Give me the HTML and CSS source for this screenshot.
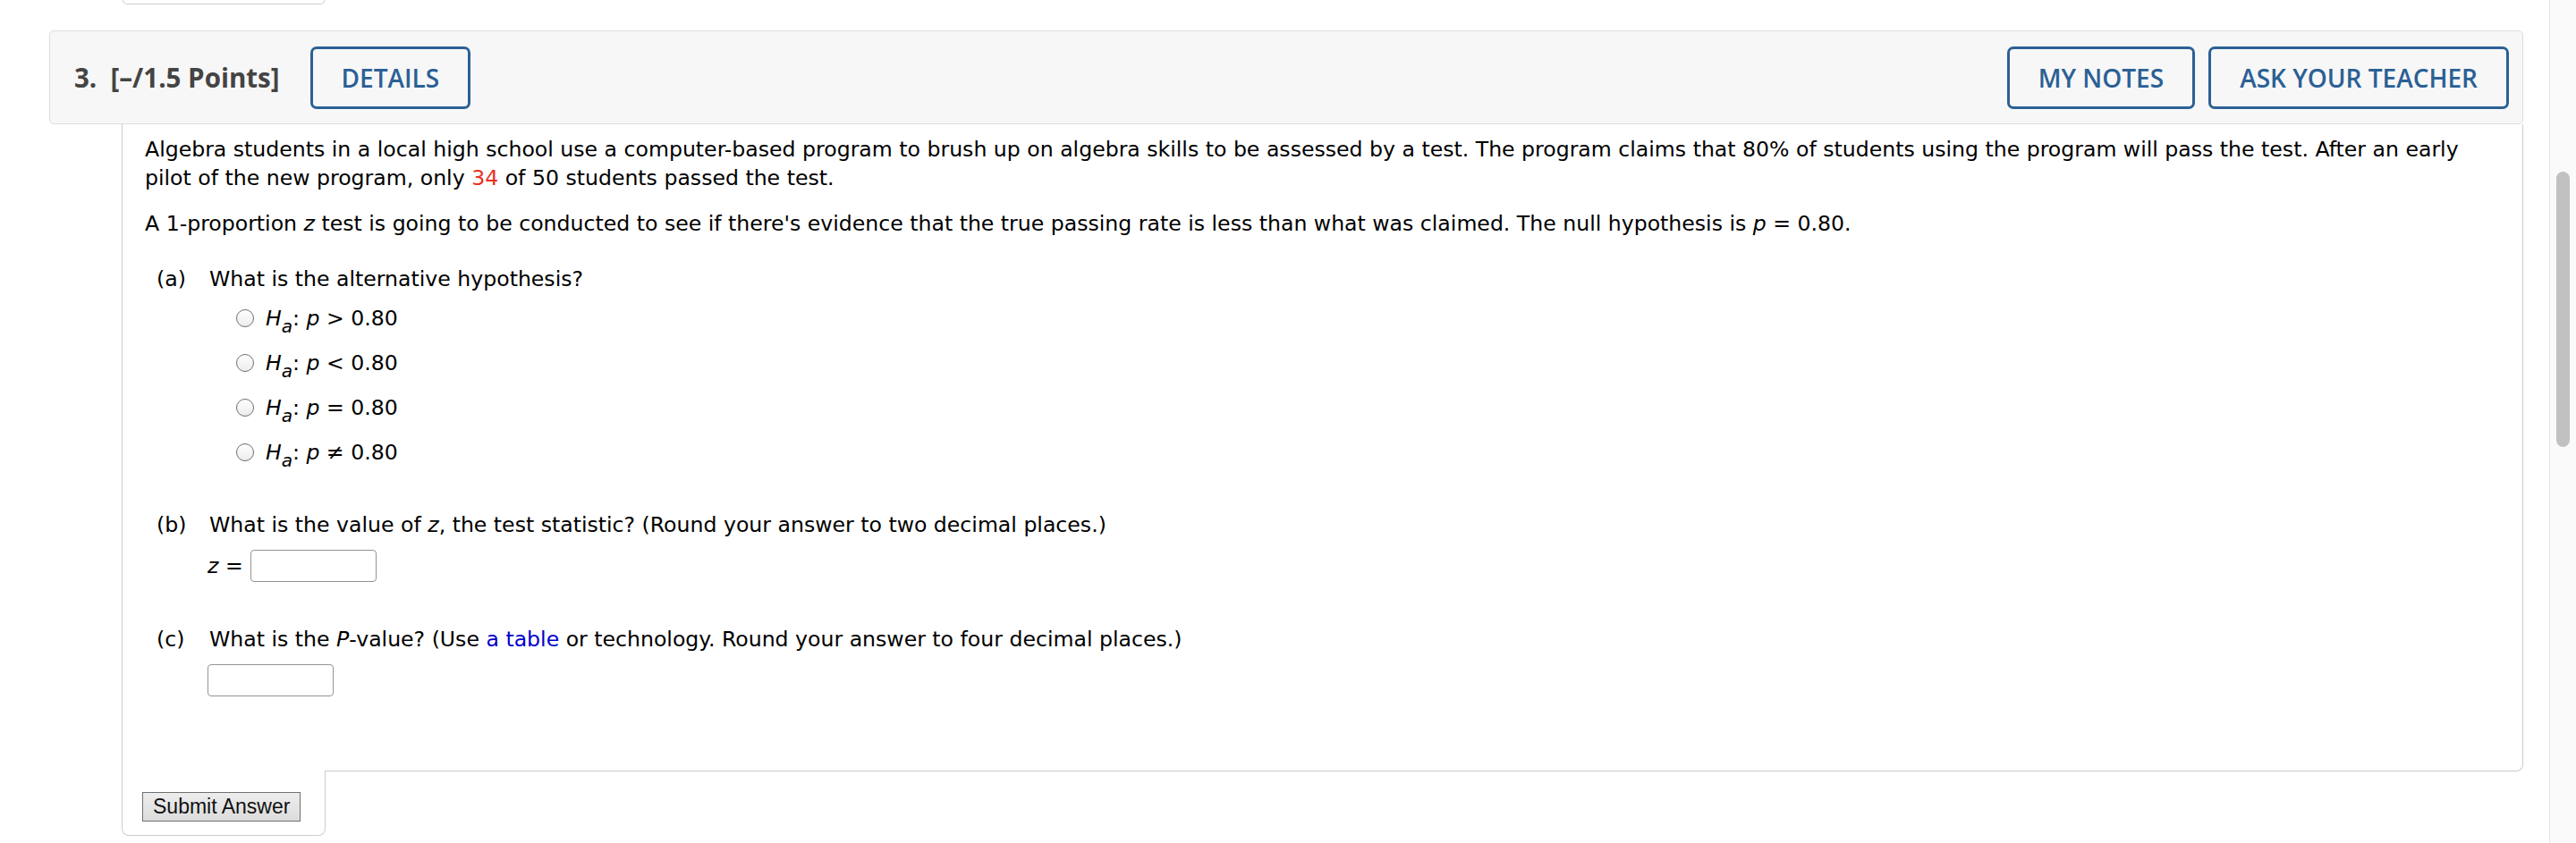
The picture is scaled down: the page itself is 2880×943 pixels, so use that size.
FILE: index.html
```html
<!DOCTYPE html>
<html lang="en">
<head>
<meta charset="utf-8">
<title>Question 3</title>
<link rel="stylesheet" href="styles.css">
</head>
<body>
<div class="page">
  <main class="main">
    <div class="prev-tab"></div>
    <section class="question">
      <header class="q-head">
        <div class="q-title">3.&nbsp;&nbsp;[–/1.5 Points]</div>
        <button class="hbtn details">DETAILS</button>
        <div class="spacer"></div>
        <button class="hbtn">MY NOTES</button>
        <button class="hbtn">ASK YOUR TEACHER</button>
      </header>
      <div class="q-body">
        <p class="p1"><span>Algebra students in a local high school use a computer-based program to brush up on algebra skills to be assessed by a test. The program claims that 80% of students using the program will pass the test. After an early</span> <span>pilot of the new program, only</span> <span class="red">34</span> <span>of 50 students passed the test.</span></p>
        <p class="p2">A 1-proportion <i>z</i> test is going to be conducted to see if there's evidence that the true passing rate is less than what was claimed. The null hypothesis is <i>p</i> = 0.80.</p>

        <div class="part part-a">
          <span class="plabel">(a)</span>
          <span class="ptext">What is the alternative hypothesis?</span>
        </div>
        <div class="choices">
          <div class="choice"><span class="radio"></span><span class="ctext"><i>H</i><sub><i>a</i></sub>: <i>p</i> &gt; 0.80</span></div>
          <div class="choice"><span class="radio"></span><span class="ctext"><i>H</i><sub><i>a</i></sub>: <i>p</i> &lt; 0.80</span></div>
          <div class="choice"><span class="radio"></span><span class="ctext"><i>H</i><sub><i>a</i></sub>: <i>p</i> = 0.80</span></div>
          <div class="choice"><span class="radio"></span><span class="ctext"><i>H</i><sub><i>a</i></sub>: <i>p</i> ≠ 0.80</span></div>
        </div>

        <div class="part part-b">
          <span class="plabel">(b)</span>
          <span class="ptext">What is the value of <i>z</i>, the test statistic? (Round your answer to two decimal places.)</span>
        </div>
        <div class="answer-row">
          <span class="zlabel"><i>z</i> = </span><span class="inputbox"></span>
        </div>

        <div class="part part-c">
          <span class="plabel">(c)</span>
          <span class="ptext">What is the <i>P</i>-value? (Use <a class="link" href="#">a table</a> or technology. Round your answer to four decimal places.)</span>
        </div>
        <div class="answer-row answer-c">
          <span class="inputbox"></span>
        </div>
      </div>
      <div class="q-foot">
        <button class="submit">Submit Answer</button>
      </div>
    </section>
  </main>
  <div class="scrollbar"><div class="thumb"></div></div>
</div>
</body>
</html>
```

FILE: styles.css
```css
html, body {
  margin: 0;
  padding: 0;
  background: #ffffff;
  height: 943px;
  overflow: hidden;
}

.page {
  display: flex;
  height: 943px;
}

.main {
  flex: 1;
  padding: 0 29px 0 55px;
  min-width: 0;
}

.prev-tab {
  margin-left: 82px;
  width: 224px;
  height: 4px;
  border: 1px solid #cccccc;
  border-top: none;
  border-radius: 0 0 7px 7px;
}

.question {
  margin-top: 29px;
}

.q-head {
  display: flex;
  align-items: center;
  height: 103px;
  background: #f7f7f7;
  border: 1px solid #dddddd;
  border-radius: 5px;
  padding: 0 15px 0 27px;
}

.q-title {
  font-family: "Open Sans", "DejaVu Sans", sans-serif;
  font-weight: 700;
  font-size: 29.5px;
  color: #444444;
  margin-right: 34px;
  white-space: nowrap;
}

.spacer {
  flex: 1;
}

.hbtn {
  font-family: "Open Sans", "DejaVu Sans", sans-serif;
  font-weight: 600;
  font-size: 28px;
  color: #2b6095;
  background: transparent;
  border: 3px solid #2b6095;
  border-radius: 7px;
  height: 70px;
  padding: 0 32px;
  margin-left: 15px;
  white-space: nowrap;
}

.hbtn.details {
  margin-left: 0;
}

.q-body {
  margin-left: 81px;
  border: 1px solid #cccccc;
  border-top: none;
  border-radius: 0 0 8px 0;
  padding: 12px 25px 83px 25px;
  font-family: "DejaVu Sans", Verdana, sans-serif;
  font-size: 23.6px;
  line-height: 32px;
  color: #000000;
}

.q-body p {
  margin: 0;
}

.p2 {
  margin-top: 19px !important;
}

.red {
  color: #e8321e;
}

.link {
  color: #0000cc;
  text-decoration: none;
}

.part {
  display: flex;
  margin-left: 13px;
}

.part-a {
  margin-top: 30px;
}

.part-b {
  margin-top: 40px;
}

.part-c {
  margin-top: 48px;
}

.plabel {
  width: 59px;
  flex: none;
}

.choices {
  margin-left: 102px;
  margin-top: 3px;
}

.choice {
  display: flex;
  align-items: center;
  height: 50px;
}

.radio {
  width: 18px;
  height: 18px;
  border: 1.5px solid #6e6e6e;
  border-radius: 50%;
  background: linear-gradient(#ffffff, #ececec);
  margin-right: 13px;
  flex: none;
}

.ctext sub {
  font-size: 0.85em;
  line-height: 0;
  vertical-align: -0.4em;
}

.answer-row {
  display: flex;
  align-items: center;
  margin-left: 70px;
  margin-top: 12px;
  height: 36px;
}

.zlabel {
  white-space: pre;
  margin-right: 1px;
}

.inputbox {
  display: block;
  width: 139px;
  height: 34px;
  border: 1px solid #949494;
  border-radius: 4px;
  background: #ffffff;
}

.q-foot {
  margin-left: 81px;
  margin-top: -1px;
  width: 204px;
  background: #ffffff;
  border: 1px solid #cccccc;
  border-top: none;
  border-radius: 0 0 8px 8px;
  padding: 24px 0 15px 22px;
}

.submit {
  display: block;
  font-family: "Liberation Sans", Arial, sans-serif;
  font-size: 23px;
  color: #111111;
  height: 33px;
  padding: 0 11px;
  border: 1px solid #707070;
  border-radius: 0;
  background: linear-gradient(#ededed, #dcdcdc);
  line-height: 29px;
}

.scrollbar {
  width: 29px;
  flex: none;
  background: #fafafa;
  border-left: 1px solid #e6e6e6;
  padding-top: 192px;
}

.thumb {
  width: 15px;
  height: 308px;
  margin-left: 7px;
  background: #c1c1c1;
  border-radius: 8px;
}
```
